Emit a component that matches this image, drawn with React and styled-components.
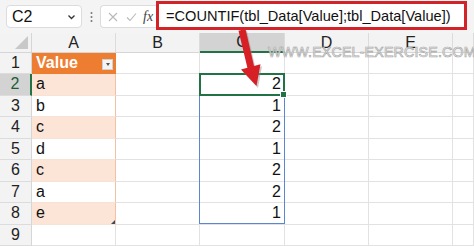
import React from 'react'
import styled, { createGlobalStyle } from 'styled-components'

const GlobalStyle = createGlobalStyle`
  html, body {
    margin: 0;
    padding: 0;
    background: #ffffff;
  }
  body {
    font-family: "Liberation Sans", Arial, sans-serif;
    color: #111;
  }
`

const Page = styled.div`
  position: relative;
  width: 474px;
  height: 246px;
  overflow: hidden;
  background: #fff;
`

const Toolbar = styled.div`
  display: flex;
  align-items: center;
  height: 33px;
  padding-left: 6px;
  background: #f4f4f4;
  box-sizing: border-box;
`

const NameBox = styled.div`
  display: flex;
  align-items: center;
  justify-content: space-between;
  width: 76px;
  height: 23px;
  box-sizing: border-box;
  padding: 0 5px 0 5px;
  background: #fff;
  border: 1px solid #dcdcdc;
  border-radius: 4px;
  font-size: 16px;
`

const Grip = styled.div`
  width: 18px;
  display: flex;
  justify-content: center;
`

const FxBox = styled.div`
  display: flex;
  align-items: center;
  gap: 8px;
  width: 56px;
  height: 23px;
  box-sizing: border-box;
  padding-left: 7px;
  background: #fff;
  border: 1px solid #dcdcdc;
  border-right: none;
  border-radius: 4px 0 0 4px;
`

const Fx = styled.span`
  font-family: "Liberation Serif", serif;
  font-style: italic;
  font-size: 14px;
  color: #444;
  margin-left: -2px;
`

const Formula = styled.div`
  display: flex;
  align-items: center;
  width: 311px;
  height: 29px;
  margin-top: -2px;
  box-sizing: border-box;
  padding-left: 7px;
  background: #fff;
  border: 3px solid #d42229;
  font-size: 14.6px;
  white-space: nowrap;
`

const Sheet = styled.div`
  display: grid;
  grid-template-columns: 32px 84px 84px 85px 84px 84px 1fr;
  grid-template-rows: 19.5px repeat(9, 21.5px);
`

const Cell = styled.div`
  grid-row: ${p => p.$r};
  grid-column: ${p => p.$c};
  position: relative;
  box-sizing: border-box;
  display: flex;
  align-items: center;
  justify-content: ${p => (p.$num ? 'flex-end' : 'flex-start')};
  padding: 0 ${p => (p.$num ? '3px' : '0')} 0 ${p => (p.$num ? '0' : '4px')};
  font-size: 16px;
  background: ${p => (p.$band ? '#fce4d6' : '#fff')};
  border-right: 1px solid ${p => (p.$table ? '#f3c2a2' : '#e2e2e2')};
  border-bottom: 1px solid ${p => (p.$table ? '#f6e3d8' : '#e2e2e2')};
`

const TableHead = styled(Cell)`
  background: #ed7d31;
  color: #fff;
  font-weight: bold;
  justify-content: space-between;
  padding-right: 2px;
  border-right-color: #ed7d31;
  border-bottom-color: #ed7d31;
`

const FilterBtn = styled.span`
  width: 9px;
  height: 9px;
  margin-top: 3px;
  background: #f4f4f4;
  border: 1px solid #d0d0d0;
  display: flex;
  align-items: center;
  justify-content: center;
  &::after {
    content: "";
    border-left: 2.5px solid transparent;
    border-right: 2.5px solid transparent;
    border-top: 3px solid #555;
  }
`

const ColHead = styled.div`
  grid-row: 1;
  grid-column: ${p => p.$c};
  box-sizing: border-box;
  display: flex;
  align-items: flex-end;
  justify-content: center;
  font-size: 16px;
  color: #222;
  background: ${p => (p.$active ? '#d3d3d3' : '#f3f3f3')};
  border-right: 1px solid #dcdcdc;
  border-bottom: ${p => (p.$active ? '2px solid #217346' : '1px solid #d6d6d6')};
`

const RowHead = styled.div`
  grid-row: ${p => p.$r};
  grid-column: 1;
  box-sizing: border-box;
  display: flex;
  align-items: center;
  justify-content: center;
  font-size: 16px;
  color: ${p => (p.$active ? '#1d5e38' : '#222')};
  background: ${p => (p.$active ? '#d3d3d3' : '#f3f3f3')};
  border-right: ${p => (p.$active ? '2px solid #217346' : '1px solid #d6d6d6')};
  border-bottom: 1px solid #dcdcdc;
`

const Corner = styled.div`
  grid-row: 1;
  grid-column: 1;
  position: relative;
  background: #f3f3f3;
  border-right: 1px solid #d6d6d6;
  border-bottom: 1px solid #d6d6d6;
  &::after {
    content: "";
    position: absolute;
    right: 3px;
    bottom: 3px;
    border-left: 13px solid transparent;
    border-bottom: 13px solid #c8c8c8;
  }
`

const ResizeGrip = styled.span`
  position: absolute;
  right: 0;
  bottom: 0;
  border-left: 4px solid transparent;
  border-bottom: 4px solid #3d4b5c;
`

const RangeBox = styled.div`
  grid-row: 3 / 10;
  grid-column: 4;
  margin: 0 0 1px -1px;
  border: 1px solid #5c86cf;
  pointer-events: none;
  z-index: 2;
`

const ActiveBox = styled.div`
  grid-row: 3;
  grid-column: 4;
  position: relative;
  margin: -1px 0 0 -1px;
  border: 2px solid #217346;
  pointer-events: none;
  z-index: 3;
  &::after {
    content: "";
    position: absolute;
    right: -4px;
    bottom: -4px;
    width: 5px;
    height: 5px;
    background: #217346;
    border: 1px solid #fff;
  }
`

const Watermark = styled.div`
  position: absolute;
  left: 268px;
  top: 44px;
  font-size: 14.2px;
  letter-spacing: 0.2px;
  color: rgba(255, 255, 255, 0.85);
  -webkit-text-stroke: 0.7px #a8a8a8;
  white-space: nowrap;
  pointer-events: none;
  z-index: 4;
`

const Arrow = styled.svg`
  position: absolute;
  left: 0;
  top: 0;
  pointer-events: none;
  z-index: 5;
`

const rows = [
  { v: 'a', n: 2 },
  { v: 'b', n: 1 },
  { v: 'c', n: 2 },
  { v: 'd', n: 1 },
  { v: 'c', n: 2 },
  { v: 'a', n: 2 },
  { v: 'e', n: 1 },
]

const letters = ['A', 'B', 'C', 'D', 'E', '']

const arrowPoints = '245.5,29 238.5,30.8 247.4,67.7 241,69.4 256.5,86 260.5,64.2 254,66'

export default function App() {
  const body = []
  for (let i = 0; i < 9; i++) {
    const r = i + 2
    const rowNo = i + 1
    body.push(<RowHead key={'h' + r} $r={r} $active={rowNo === 2}>{rowNo}</RowHead>)
    if (rowNo === 1) {
      body.push(
        <TableHead key={'a' + r} $r={r} $c={2}>
          Value
          <FilterBtn />
        </TableHead>
      )
    } else if (rowNo <= 8) {
      const d = rows[rowNo - 2]
      body.push(
        <Cell key={'a' + r} $r={r} $c={2} $table $band={rowNo % 2 === 0}>
          {d.v}
          {rowNo === 8 && <ResizeGrip />}
        </Cell>
      )
    } else {
      body.push(<Cell key={'a' + r} $r={r} $c={2} />)
    }
    for (let c = 3; c <= 7; c++) {
      const d = rowNo >= 2 && rowNo <= 8 && c === 4 ? rows[rowNo - 2] : null
      body.push(
        <Cell key={'c' + r + '-' + c} $r={r} $c={c} $num={!!d}>
          {d ? d.n : ''}
        </Cell>
      )
    }
  }

  return (
    <Page>
      <GlobalStyle />
      <Toolbar>
        <NameBox>
          C2
          <svg width="9" height="6" viewBox="0 0 9 6">
            <path d="M1.5 1.5 L4.5 4.5 L7.5 1.5" fill="none" stroke="#333" strokeWidth="1.3" />
          </svg>
        </NameBox>
        <Grip>
          <svg width="3" height="12" viewBox="0 0 3 12">
            <circle cx="1.5" cy="2" r="1" fill="#777" />
            <circle cx="1.5" cy="6" r="1" fill="#777" />
            <circle cx="1.5" cy="10" r="1" fill="#777" />
          </svg>
        </Grip>
        <FxBox>
          <svg width="10" height="10" viewBox="0 0 10 10">
            <path d="M1 1 L9 9 M9 1 L1 9" stroke="#b9b9b9" strokeWidth="1.1" />
          </svg>
          <svg width="11" height="10" viewBox="0 0 11 10">
            <path d="M1 5.5 L4 8.5 L10 1.5" fill="none" stroke="#b9b9b9" strokeWidth="1.1" />
          </svg>
          <Fx>fx</Fx>
        </FxBox>
        <Formula>=COUNTIF(tbl_Data[Value];tbl_Data[Value])</Formula>
      </Toolbar>
      <Sheet>
        <Corner />
        {letters.map((l, i) => (
          <ColHead key={'col' + i} $c={i + 2} $active={l === 'C'}>{l}</ColHead>
        ))}
        {body}
        <RangeBox />
        <ActiveBox />
      </Sheet>
      <Watermark>WWW.EXCEL-EXERCISE.COM</Watermark>
      <Arrow width="474" height="246" viewBox="0 0 474 246">
        <polygon points={arrowPoints} fill="#8a8a8a" opacity="0.45" transform="translate(1.5,2)" />
        <polygon points={arrowPoints} fill="#d71f26" />
      </Arrow>
    </Page>
  )
}
